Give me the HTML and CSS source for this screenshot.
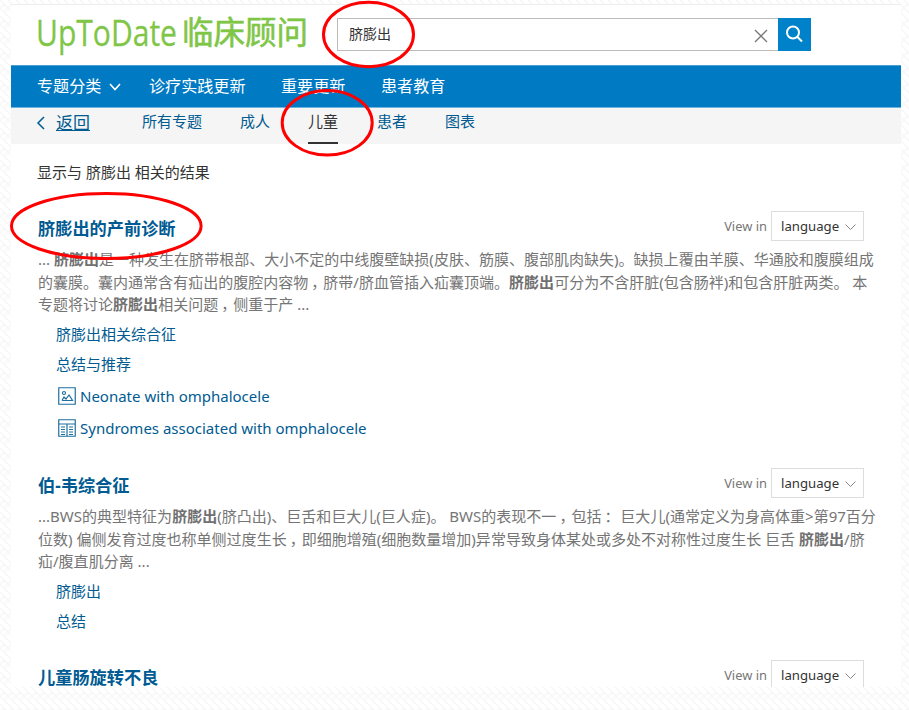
FILE: index.html
```html
<!DOCTYPE html>
<html lang="zh-CN">
<head>
    <meta charset="utf-8">
    <title>UpToDate 临床顾问</title>
    <link rel="stylesheet" href="styles.css">
</head>

<body>
    <svg class="weave" width="909" height="710" aria-hidden="true">
        <defs>
            <pattern id="weave" width="16" height="16" patternUnits="userSpaceOnUse">
                <path d="M0 0l8 8M8 0l8 8M4 12l8-8M-4 12l8-8M12 12l8-8M0 8l8 8M8 8l8 8" />
            </pattern>
        </defs>
        <rect width="909" height="710" fill="url(#weave)" />
    </svg>
    <div class="page">
        <header>
            <svg class="logo" width="274" height="60">
                <text x="0" y="41" textLength="141" lengthAdjust="spacingAndGlyphs">UpToDate</text>
                <text class="cjk" x="146" y="38.5" textLength="126">临床顾问</text>
            </svg>
            <div class="search">
                <span class="query">脐膨出</span>
                <svg class="clear" width="14" height="14"><path d="M1 1l12 12M13 1L1 13" /></svg>
                <span class="go">
                    <svg width="18" height="18"><circle cx="8" cy="7.5" r="6" /><path d="M12 11.5l5 5" /></svg>
                </span>
            </div>
        </header>

        <nav class="main-nav">
            <a class="topics">专题分类 <svg width="12" height="8"><path d="M1 1l5 5.5L11 1" /></svg></a>
            <a class="practice">诊疗实践更新</a>
            <a class="updates">重要更新</a>
            <a>患者教育</a>
        </nav>

        <nav class="filters">
            <a class="back"><svg width="9" height="14"><path d="M8 1L2 7l6 6" /></svg><span>返回</span></a>
            <a class="all">所有专题</a>
            <a class="adult">成人</a>
            <a class="child active">儿童</a>
            <a class="patient">患者</a>
            <a>图表</a>
        </nav>

        <main>
            <p class="info">显示与 脐膨出 相关的结果</p>

            <section class="result">
                <div class="head">
                    <h2>脐膨出的产前诊断</h2>
                    <div class="view">View in <span class="language">language <svg width="11" height="7"><path d="M.5 .5l5 5 5-5" /></svg></span></div>
                </div>
                <p class="excerpt">
                    <span>... <b>脐膨出</b>是一种发生在脐带根部、大小不定的中线腹壁缺损(皮肤、筋膜、腹部肌肉缺失)。缺损上覆由羊膜、华通胶和腹膜组成</span>
                    <span>的囊膜。囊内通常含有疝出的腹腔内容物<i>，</i>脐带/脐血管插入疝囊顶端。<b>脐膨出</b>可分为不含肝脏(包含肠袢)和包含肝脏两类。 本</span>
                    <span>专题将讨论<b>脐膨出</b>相关问题<i>，</i>侧重于产 ...</span>
                </p>
                <ul>
                    <li>脐膨出相关综合征</li>
                    <li>总结与推荐</li>
                    <li class="graphic">
                        <svg width="18" height="18"><path d="M.75.75h16.5v16.5H.75zM4 13.5h10.5L11 8l-3 4-2-2-2 3.5" /><circle cx="6" cy="6" r="1.5" /></svg>Neonate with omphalocele
                    </li>
                    <li class="graphic">
                        <svg width="18" height="18"><path d="M.75.75h16.5v16.5H.75zM1 5h16M9 5v12M3 8h4M3 10.5h4M3 13h4M3 15.5h4M11 8h4M11 10.5h4M11 13h4M11 15.5h4" /></svg>Syndromes associated with omphalocele
                    </li>
                </ul>
            </section>

            <section class="result">
                <div class="head">
                    <h2>伯-韦综合征</h2>
                    <div class="view">View in <span class="language">language <svg width="11" height="7"><path d="M.5 .5l5 5 5-5" /></svg></span></div>
                </div>
                <p class="excerpt">
                    <span>...BWS的典型特征为<b>脐膨出</b>(脐凸出)、巨舌和巨大儿(巨人症)。 BWS的表现不一<i>，</i>包括<i>：</i> 巨大儿(通常定义为身高体重&gt;第97百分</span>
                    <span>位数) 偏侧发育过度也称单侧过度生长<i>，</i>即细胞增殖(细胞数量增加)异常导致身体某处或多处不对称性过度生长 巨舌 <b>脐膨出</b>/脐</span>
                    <span>疝/腹直肌分离 ...</span>
                </p>
                <ul>
                    <li>脐膨出</li>
                    <li>总结</li>
                </ul>
            </section>

            <section class="result">
                <div class="head">
                    <h2>儿童肠旋转不良</h2>
                    <div class="view">View in <span class="language">language <svg width="11" height="7"><path d="M.5 .5l5 5 5-5" /></svg></span></div>
                </div>
            </section>
        </main>
    </div>

    <svg class="marks" width="909" height="710" aria-hidden="true">
        <ellipse cx="368.5" cy="34.5" rx="45" ry="32.2" />
        <ellipse cx="327.2" cy="122.8" rx="45" ry="32.3" />
        <ellipse cx="106.3" cy="226" rx="94.8" ry="32.5" />
    </svg>
</body>

</html>
```
FILE: styles.css
```css
html,
body {
    margin: 0;
    padding: 0;
}

body {
    position: relative;
    width: 909px;
    height: 710px;
    overflow: hidden;
    background-color: #fff;
    font-family: "Noto Sans", "Noto Sans CJK SC", sans-serif;
    font-size: 15px;
    color: #333;
}

svg {
    fill: none;
    flex: none;
}

.weave {
    position: absolute;
    top: 0;
    left: 0;
}

.weave path {
    stroke: #f7f7f7;
    stroke-width: 1.5;
}

.page {
    position: relative;
    box-sizing: border-box;
    width: 890px;
    height: 683px;
    margin: 4px 0 0 11px;
    overflow: hidden;
    background-color: #fff;
    border-top: 1px solid #eee;
}

header {
    display: flex;
    height: 60px;
    padding-left: 25px;
}

.logo {
    overflow: visible;
    fill: #7fc647;
    stroke: #7fc647;
    stroke-width: 0.3;
    font-family: "Open Sans", "Noto Sans", sans-serif;
    font-size: 37px;
}

.logo .cjk {
    font-family: "Noto Sans CJK SC", sans-serif;
    font-size: 31.5px;
    stroke-width: 0.6;
}

.search {
    box-sizing: border-box;
    display: flex;
    align-items: center;
    width: 474px;
    height: 33px;
    margin: 13px 0 0 27px;
    border: 1px solid #bbb;
}

.query {
    flex: 1;
    padding: 0 0 3px 11px;
    font-size: 14px;
}

.clear {
    margin: 2px 11px 0 0;
    stroke: #777;
    stroke-width: 1.3;
}

.go {
    display: flex;
    box-sizing: border-box;
    width: 33px;
    height: 33px;
    margin: -1px;
    padding: 7px 0 0 7px;
    background-color: #0082ca;
}

.go svg {
    stroke: #fff;
    stroke-width: 2;
}

.main-nav {
    display: flex;
    box-sizing: border-box;
    height: 43px;
    padding-left: 26px;
    line-height: 41px;
    font-size: 16.1px;
    color: #fff;
    background-color: #007ac3;
    border-top: 1px solid #4a9fd4;
    border-bottom: 1px solid #6db3dc;
}

.main-nav svg {
    margin-left: 3px;
    vertical-align: 1px;
    stroke: #fff;
    stroke-width: 1.6;
}

.topics {
    width: 112px;
}

.practice {
    width: 132px;
}

.updates {
    width: 100px;
}

.filters {
    display: flex;
    height: 36px;
    padding-left: 25px;
    line-height: 27px;
    color: #005b92;
    background-color: #f5f5f5;
}

.back {
    display: flex;
    width: 106px;
    font-size: 17px;
}

.back svg {
    margin: 8px 11px 0 0;
    stroke: #005b92;
    stroke-width: 1.5;
}

.back span {
    line-height: 30px;
    text-decoration: underline;
    text-decoration-thickness: 1px;
    text-underline-offset: 1px;
}

.all {
    width: 98px;
}

.adult {
    width: 68px;
}

.child {
    width: 30px;
    margin-right: 39px;
}

.patient {
    width: 68px;
}

.filters .active {
    box-sizing: border-box;
    color: #333;
    border-bottom: 2px solid #333;
}

main {
    padding: 17px 0 0 27px;
}

p,
h2,
ul {
    margin: 0;
    padding: 0;
}

.info {
    height: 50px;
    margin-left: -1px;
    line-height: 22px;
}

.head {
    display: flex;
    justify-content: space-between;
    height: 37px;
    padding-right: 37px;
}

h2 {
    line-height: 35px;
    font-size: 17.2px;
    font-weight: 700;
    color: #005b92;
}

.view {
    display: flex;
    align-items: center;
    height: 30px;
    font-size: 12.9px;
    color: #777;
}

.language {
    display: flex;
    box-sizing: border-box;
    align-items: center;
    justify-content: space-between;
    width: 93px;
    height: 30px;
    margin-left: 4px;
    padding: 0 7px 1px 9px;
    font-size: 13.2px;
    color: #333;
    border: 1px solid #ddd;
}

.language svg {
    margin-top: 3px;
    stroke: #888;
}

.excerpt {
    font-size: 15.02px;
    color: #757575;
}

.excerpt span {
    display: block;
    height: 22.7px;
    line-height: 22.7px;
    white-space: nowrap;
}

.excerpt b {
    font-weight: 700;
    color: #707070;
}

/* full-width punctuation sits in the middle of its cell */
.excerpt i {
    position: relative;
    left: 3px;
    font-style: normal;
}

ul {
    padding: 3px 0 24px 18px;
    list-style: none;
}

li {
    height: 30px;
    line-height: 30px;
    color: #005b92;
}

.graphic {
    display: flex;
    align-items: center;
    height: 32px;
    padding-left: 2px;
    line-height: 32px;
}

li:not(.graphic) + .graphic {
    margin-top: 1px;
}

.graphic svg {
    margin-right: 4px;
    stroke: #1f6f9f;
    stroke-width: 1.2;
}

.marks {
    position: absolute;
    top: 0;
    left: 0;
}

.marks ellipse {
    stroke: #f00;
    stroke-width: 3;
}
```
